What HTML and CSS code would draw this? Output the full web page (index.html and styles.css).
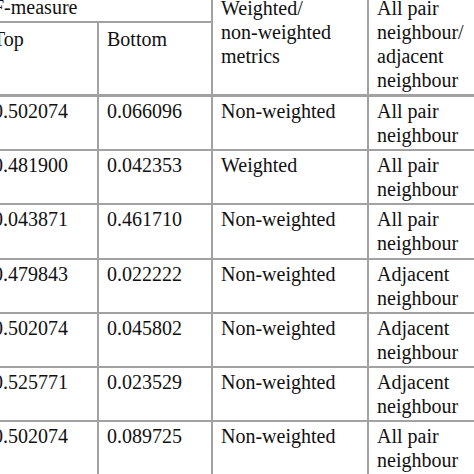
FILE: index.html
```html
<!DOCTYPE html>
<html>
<head>
<meta charset="utf-8">
<link rel="stylesheet" href="styles.css">
</head>
<body>
<div class="frame">
<table class="results">
  <colgroup>
    <col class="c-top">
    <col class="c-bottom">
    <col class="c-weight">
    <col class="c-neigh">
  </colgroup>
  <thead>
    <tr class="h-row1">
      <th colspan="2" class="h-group">F-measure</th>
      <th rowspan="2" class="h-span">Weighted/<br>non-weighted<br>metrics</th>
      <th rowspan="2" class="h-span">All pair<br>neighbour/<br>adjacent<br>neighbour</th>
    </tr>
    <tr class="h-row2">
      <th class="h-sub">Top</th>
      <th class="h-sub">Bottom</th>
    </tr>
  </thead>
  <tbody>
    <tr><td>0.502074</td><td>0.066096</td><td>Non-weighted</td><td>All pair<br>neighbour</td></tr>
    <tr><td>0.481900</td><td>0.042353</td><td>Weighted</td><td>All pair<br>neighbour</td></tr>
    <tr><td>0.043871</td><td>0.461710</td><td>Non-weighted</td><td>All pair<br>neighbour</td></tr>
    <tr><td>0.479843</td><td>0.022222</td><td>Non-weighted</td><td>Adjacent<br>neighbour</td></tr>
    <tr><td>0.502074</td><td>0.045802</td><td>Non-weighted</td><td>Adjacent<br>neighbour</td></tr>
    <tr><td>0.525771</td><td>0.023529</td><td>Non-weighted</td><td>Adjacent<br>neighbour</td></tr>
    <tr><td>0.502074</td><td>0.089725</td><td>Non-weighted</td><td>All pair<br>neighbour</td></tr>
  </tbody>
</table>
</div>
</body>
</html>
```
FILE: styles.css
```css
html, body {
  margin: 0;
  padding: 0;
  background: #ffffff;
}
.frame {
  width: 474px;
  height: 474px;
  overflow: hidden;
}
.results {
  border-collapse: collapse;
  table-layout: fixed;
  width: 516px;
  margin-left: -17px;
  margin-top: -8px;
  font-family: "Liberation Serif", "Times New Roman", serif;
  font-size: 20px;
  line-height: 24px;
  color: #111111;
}
.c-top { width: 114px; }
.c-bottom { width: 114px; }
.c-weight { width: 156px; }
.c-neigh { width: 132px; }
.results th,
.results td {
  border: 2px solid #a2a2a2;
  padding: 2px 8px 2.15px;
  text-align: left;
  vertical-align: top;
  font-weight: normal;
  white-space: nowrap;
}
.results .h-group {
  height: 24px;
  padding-top: 1px;
  padding-bottom: 2px;
}
.results .h-sub {
  height: 64px;
  padding-top: 4px;
}
.results .h-sub,
.results .h-span {
  border-bottom: 3px solid #a2a2a2;
}
```
